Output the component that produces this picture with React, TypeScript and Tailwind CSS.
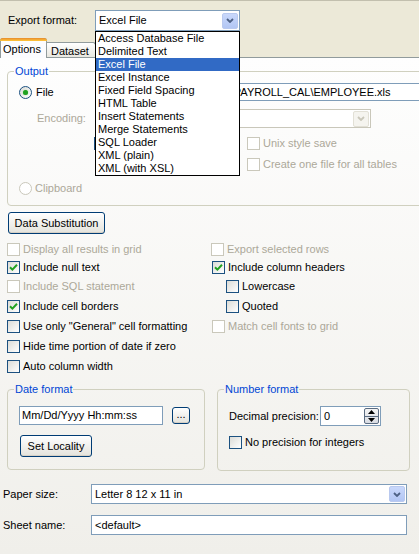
import React from 'react';

const FORMATS = [
  'Access Database File',
  'Delimited Text',
  'Excel File',
  'Excel Instance',
  'Fixed Field Spacing',
  'HTML Table',
  'Insert Statements',
  'Merge Statements',
  'SQL Loader',
  'XML (plain)',
  'XML (with XSL)',
];

const Check: React.FC<{ checked?: boolean; disabled?: boolean }> = ({ checked, disabled }) => (
  <span
    className={
      disabled
        ? 'w-[13px] h-[13px] shrink-0 border border-[#cac8bb] bg-white flex items-center justify-center'
        : 'w-[13px] h-[13px] shrink-0 border border-[#1c5180] bg-linear-to-br from-[#dcdcd7] to-white flex items-center justify-center'
    }
  >
    {checked && (
      <svg width="9" height="9" viewBox="0 0 9 9">
        <path d="M1 4.2 L3.4 6.6 L8 1.8" stroke="#21a121" strokeWidth="2" fill="none" />
      </svg>
    )}
  </span>
);

const Radio: React.FC<{ checked?: boolean; disabled?: boolean }> = ({ checked, disabled }) => (
  <span
    className={
      disabled
        ? 'w-[13px] h-[13px] shrink-0 rounded-full border border-[#cac8bb] bg-white'
        : 'w-[13px] h-[13px] shrink-0 rounded-full border border-[#1c5180] bg-linear-to-br from-[#dcdcd7] to-white flex items-center justify-center'
    }
  >
    {checked && <span className="w-[5px] h-[5px] rounded-full bg-[#21a121] shadow-[0_0_1px_#5fd35f]" />}
  </span>
);

const CheckRow: React.FC<{ label: string; checked?: boolean; disabled?: boolean; className?: string }> = ({
  label,
  checked,
  disabled,
  className = '',
}) => (
  <div className={`flex items-center gap-[3px] ${className}`}>
    <Check checked={checked} disabled={disabled} />
    <span className={disabled ? 'text-[#aca899]' : 'text-black'}>{label}</span>
  </div>
);

const Arrow: React.FC<{ disabled?: boolean }> = ({ disabled }) => (
  <span
    className={
      disabled
        ? 'w-[16px] h-[16px] rounded-[2px] border border-[#e2e0d6] bg-[#f5f4ef] flex items-center justify-center'
        : 'w-[16px] h-[16px] rounded-[2px] border border-[#b9c9ef] bg-linear-to-b from-[#c9d8fb] to-[#b2c6f4] flex items-center justify-center'
    }
  >
    <svg width="8" height="5" viewBox="0 0 8 5">
      <path d="M1 1 L4 4 L7 1" stroke={disabled ? '#c9c7ba' : '#4d6185'} strokeWidth="1.8" fill="none" />
    </svg>
  </span>
);

const XpButton: React.FC<{ children: React.ReactNode; className?: string }> = ({ children, className = '' }) => (
  <button
    className={`border border-[#003c74] rounded-[3px] bg-linear-to-b from-white to-[#e4e3dc] flex items-center justify-center text-black shadow-[inset_0_-1px_0_#d6d0c5] ${className}`}
  >
    {children}
  </button>
);

export default function App() {
  return (
    <div className="w-[419px] h-[554px] overflow-hidden relative flex flex-col font-['Liberation_Sans',Arial,sans-serif] text-[11px] leading-[13px] text-black select-none">
      {/* header */}
      <div className="h-[57px] shrink-0 bg-[#ece9d8] border-t border-[#c2bfae] flex flex-col">
        <div className="mt-[9px] h-[21px] flex items-center">
          <span className="w-[95px] pl-[8px]">Export format:</span>
          <div className="w-[145px] h-[21px] border border-[#7f9db9] bg-white flex items-center justify-between pl-[3px] pr-[1px]">
            <span>Excel File</span>
            <Arrow />
          </div>
        </div>
        <div className="mt-[7px] h-[19px] flex items-end">
          <div className="relative z-10 -mb-px h-[20px] w-[47px] border-x border-t border-[#919b9c] rounded-t-[3px] bg-[#fcfcfe] flex flex-col">
            <div className="h-[3px] -mt-px -mx-px rounded-t-[3px] bg-linear-to-b from-[#e68b2c] to-[#ffc73c]" />
            <span className="pl-[2px] mt-[2px]">Options</span>
          </div>
          <div className="h-[15px] w-[49px] border-t border-r border-[#919b9c] rounded-tr-[3px] bg-linear-to-b from-white to-[#e8e7e0] pl-[4px] pt-[2px]">
            Dataset
          </div>
        </div>
      </div>

      {/* tab page */}
      <div className="flex-1 border-t border-[#919b9c] bg-linear-to-b from-[#fefefe] to-[#f0efea] flex flex-col">
        <fieldset className="mt-[7px] ml-[7px] w-[430px] border border-[#d0d0bf] rounded-[4px] pb-[10px]">
          <legend className="ml-[6px] px-[1px] text-[#0046d5] leading-[13px]">Output</legend>
          <div className="mt-[5px] h-[18px] flex items-center">
            <div className="w-[92px] pl-[11px] flex items-center gap-[4px]">
              <Radio checked />
              <span>File</span>
            </div>
            <div className="w-[330px] h-[18px] border border-[#7f9db9] bg-white pl-[2px] flex items-center whitespace-nowrap overflow-hidden">
              C:\Export\Payroll\2024\Q1\PAYROLL_CAL\EMPLOYEE.xls
            </div>
          </div>
          <div className="mt-[8px] h-[19px] flex items-center">
            <span className="w-[92px] pl-[29px] text-[#aca899]">Encoding:</span>
            <div className="w-[271px] h-[19px] border border-[#c9c7ba] bg-white flex items-center justify-end pr-[1px]">
              <Arrow disabled />
            </div>
          </div>
          <div className="mt-[9px] flex items-center">
            <div className="w-[86px]" />
            <div className="w-[153px]">
              <Check />
            </div>
            <CheckRow label="Unix style save" disabled />
          </div>
          <div className="mt-[8px] flex items-center">
            <div className="w-[239px]" />
            <CheckRow label="Create one file for all tables" disabled />
          </div>
          <div className="mt-[11px] pl-[11px] flex items-center gap-[3px]">
            <Radio disabled />
            <span className="text-[#aca899]">Clipboard</span>
          </div>
        </fieldset>

        <XpButton className="mt-[6px] ml-[8px] w-[97px] h-[22px]">Data Substitution</XpButton>

        <div className="mt-[6px] grid grid-cols-[210px_1fr] grid-rows-[18px_18px_20px_20px_20px_20px_20px] items-center">
          <CheckRow className="pl-[7px]" label="Display all results in grid" disabled />
          <CheckRow className="pl-[1px]" label="Export selected rows" disabled />
          <CheckRow className="pl-[7px]" label="Include null text" checked />
          <CheckRow className="pl-[2px]" label="Include column headers" checked />
          <CheckRow className="pl-[7px]" label="Include SQL statement" disabled />
          <CheckRow className="pl-[16px]" label="Lowercase" />
          <CheckRow className="pl-[7px]" label="Include cell borders" checked />
          <CheckRow className="pl-[16px]" label="Quoted" />
          <CheckRow className="pl-[7px]" label={'Use only "General" cell formatting'} />
          <CheckRow className="pl-[2px]" label="Match cell fonts to grid" disabled />
          <CheckRow className="pl-[7px]" label="Hide time portion of date if zero" />
          <div />
          <CheckRow className="pl-[7px]" label="Auto column width" />
          <div />
        </div>

        <div className="mt-[7px] flex items-start">
          <fieldset className="ml-[7px] w-[198px] border border-[#d0d0bf] rounded-[4px] pb-[12px]">
            <legend className="ml-[6px] px-[1px] text-[#0046d5] leading-[13px]">Date format</legend>
            <div className="mt-[10px] flex items-center">
              <div className="ml-[11px] w-[144px] h-[19px] border border-[#7f9db9] bg-white pl-[2px] flex items-center">
                Mm/Dd/Yyyy Hh:mm:ss
              </div>
              <XpButton className="ml-[9px] w-[18px] h-[17px] pb-[3px]">...</XpButton>
            </div>
            <XpButton className="mt-[10px] ml-[12px] w-[72px] h-[22px]">Set Locality</XpButton>
          </fieldset>
          <fieldset className="ml-[12px] w-[193px] border border-[#d0d0bf] rounded-[4px] pb-[21px]">
            <legend className="ml-[6px] px-[1px] text-[#0046d5] leading-[13px]">Number format</legend>
            <div className="mt-[10px] h-[20px] flex items-center">
              <span className="ml-[11px] w-[91px]">Decimal precision:</span>
              <div className="w-[61px] h-[20px] border border-[#7f9db9] bg-white pl-[3px] pr-[1px] flex items-center justify-between">
                <span>0</span>
                <div className="w-[15px] h-[16px] border border-[#5a6b80] rounded-[2px] bg-linear-to-b from-[#f4f4f4] to-[#d9dce3] flex flex-col">
                  <div className="flex-1 flex items-center justify-center border-b border-[#5a6b80]">
                    <svg width="7" height="4" viewBox="0 0 7 4">
                      <path d="M0 4 L3.5 0 L7 4 Z" fill="#000" />
                    </svg>
                  </div>
                  <div className="flex-1 flex items-center justify-center">
                    <svg width="7" height="4" viewBox="0 0 7 4">
                      <path d="M0 0 L3.5 4 L7 0 Z" fill="#000" />
                    </svg>
                  </div>
                </div>
              </div>
            </div>
            <CheckRow className="mt-[10px] ml-[11px]" label="No precision for integers" />
          </fieldset>
        </div>

        <div className="mt-[13px] h-[20px] flex items-center">
          <span className="w-[91px] pl-[3px]">Paper size:</span>
          <div className="w-[316px] h-[20px] border border-[#7f9db9] bg-white pl-[3px] pr-[1px] flex items-center justify-between">
            <span>Letter 8 12 x 11 in</span>
            <Arrow />
          </div>
        </div>
        <div className="mt-[11px] h-[20px] flex items-center">
          <span className="w-[91px] pl-[3px]">Sheet name:</span>
          <div className="w-[316px] h-[20px] border border-[#7f9db9] bg-white pl-[3px] flex items-center">
            {'<default>'}
          </div>
        </div>
      </div>

      {/* open dropdown list */}
      <div className="absolute left-[95px] top-[31px] w-[145px] z-20 border border-black bg-white">
        {FORMATS.map((f) => (
          <div
            key={f}
            className={
              f === 'Excel File'
                ? 'h-[13px] leading-[13px] pl-[2px] bg-[#316ac5] text-white'
                : 'h-[13px] leading-[13px] pl-[2px]'
            }
          >
            {f}
          </div>
        ))}
      </div>
    </div>
  );
}
